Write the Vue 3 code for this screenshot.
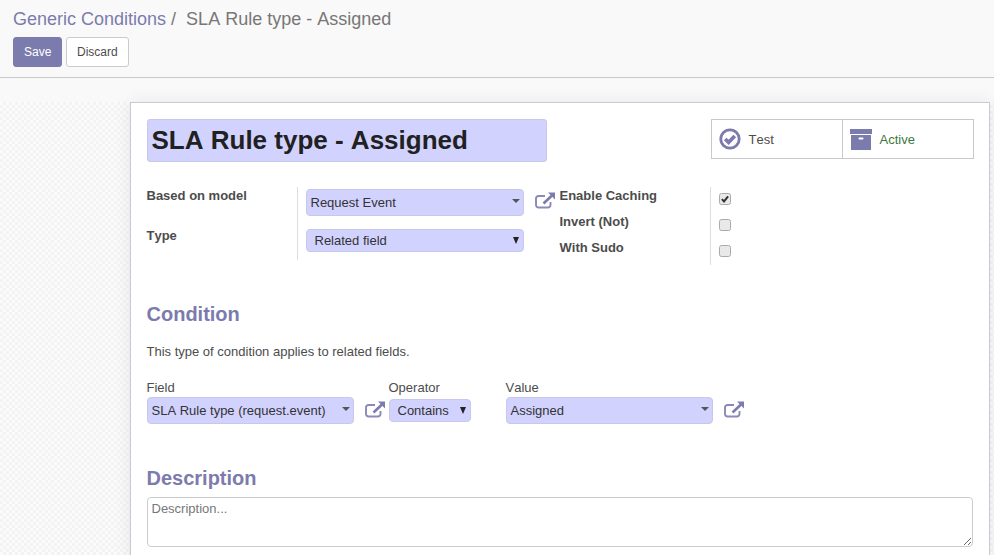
<script setup>
const flags = [
  { label: 'Enable Caching', checked: true },
  { label: 'Invert (Not)', checked: false },
  { label: 'With Sudo', checked: false },
]
</script>

<template>
  <div class="page">
    <header class="panel">
      <div class="crumbs">
        <a class="crumb-link">Generic Conditions</a><span class="crumb-sep">/</span><span class="crumb-cur">SLA Rule type - Assigned</span>
      </div>
      <div class="actions">
        <button class="btn primary">Save</button>
        <button class="btn">Discard</button>
      </div>
    </header>

    <main class="content">
      <section class="sheet">
        <div class="top">
          <div class="title">SLA Rule type - Assigned</div>
          <div class="stats">
            <div class="stat">
              <svg class="stat-icon" width="22" height="22" viewBox="0 0 22 22">
                <circle cx="11" cy="11" r="9.200" fill="none" stroke="#7c7bad" stroke-width="2.800" />
                <path d="M6.200 11l3.400 3.300 6.200-6.300" fill="none" stroke="#7c7bad" stroke-width="3.800" />
              </svg>
              <span>Test</span>
            </div>
            <div class="stat">
              <svg class="stat-icon" width="22" height="21" viewBox="0 0 22 21">
                <rect x="0" y="0" width="22" height="5" fill="#7c7bad" />
                <path d="M1 6h20v15H1z" fill="#7c7bad" />
                <rect x="8.500" y="8.500" width="5" height="2" rx="1" fill="#fff" />
              </svg>
              <span class="green">Active</span>
            </div>
          </div>
        </div>

        <div class="groups">
          <div class="group-left">
            <div class="labels">
              <div class="lbl lbl-model">Based on model</div>
              <div class="lbl lbl-type">Type</div>
            </div>
            <div class="fields">
              <div class="sel sel-model">Request Event<i class="caret"></i></div>
              <div class="sel sel-type">Related field<i class="caret dark"></i></div>
            </div>
            <svg class="ext ext-model" width="20" height="17" viewBox="0 0 20 17">
              <path d="M15.500 10v3a2.500 2.500 0 0 1-2.500 2.500H3.500A2.500 2.500 0 0 1 1 13V6.500A2.500 2.500 0 0 1 3.500 4H10" fill="none" stroke="#8a89b8" stroke-width="1.900" />
              <path d="M13 .5h7v7z" fill="#7c7bad" />
              <path d="M17 3.500L8.500 11.500" fill="none" stroke="#7c7bad" stroke-width="2.600" />
            </svg>
          </div>
          <div class="group-right">
            <div class="labels-right">
              <div v-for="f in flags" :key="f.label" class="lbl flag">{{ f.label }}</div>
            </div>
            <div class="checks">
              <div v-for="f in flags" :key="f.label" class="check">
                <span class="box">
                  <svg v-if="f.checked" width="12" height="12" viewBox="0 0 12 12"><path d="M2.200 6.200l2.600 2.700 4.900-6" fill="none" stroke="#333" stroke-width="2.400" /></svg>
                </span>
              </div>
            </div>
          </div>
        </div>

        <h2 class="section condition">Condition</h2>
        <p class="help">This type of condition applies to related fields.</p>

        <div class="cond-row">
          <div class="col col-field">
            <label>Field</label>
            <div class="sel s26">SLA Rule type (request.event)<i class="caret"></i></div>
          </div>
          <svg class="ext ext-field" width="20" height="17" viewBox="0 0 20 17">
            <path d="M15.500 10v3a2.500 2.500 0 0 1-2.500 2.500H3.500A2.500 2.500 0 0 1 1 13V6.500A2.500 2.500 0 0 1 3.500 4H10" fill="none" stroke="#8a89b8" stroke-width="1.900" />
            <path d="M13 .5h7v7z" fill="#7c7bad" />
            <path d="M17 3.500L8.500 11.500" fill="none" stroke="#7c7bad" stroke-width="2.600" />
          </svg>
          <div class="col col-op">
            <label>Operator</label>
            <div class="sel sel-op">Contains<i class="caret dark"></i></div>
          </div>
          <div class="col col-val">
            <label>Value</label>
            <div class="sel s26">Assigned<i class="caret"></i></div>
          </div>
          <svg class="ext ext-val" width="20" height="17" viewBox="0 0 20 17">
            <path d="M15.500 10v3a2.500 2.500 0 0 1-2.500 2.500H3.500A2.500 2.500 0 0 1 1 13V6.500A2.500 2.500 0 0 1 3.500 4H10" fill="none" stroke="#8a89b8" stroke-width="1.900" />
            <path d="M13 .5h7v7z" fill="#7c7bad" />
            <path d="M17 3.500L8.500 11.500" fill="none" stroke="#7c7bad" stroke-width="2.600" />
          </svg>
        </div>

        <h2 class="section description">Description</h2>
        <textarea class="desc" placeholder="Description..."></textarea>
      </section>
    </main>
  </div>
</template>

<style>
html, body { margin: 0; height: 100%; overflow: hidden; }
</style>

<style scoped>
.page {
  width: 994px;
  height: 555px;
  overflow: hidden;
  display: flex;
  flex-direction: column;
  font-family: "Liberation Sans", Arial, sans-serif;
  font-size: 13px;
  font-kerning: none;
  color: #4c4c4c;
  background: #f9f9f9;
}
.panel {
  height: 77px;
  background: #f9f9f9;
  border-bottom: 1px solid #c9c9c9;
  padding-left: 13px;
  flex: none;
}
.crumbs {
  height: 37px;
  line-height: 38px;
  font-size: 18px;
  color: #777;
}
.crumb-link { color: #7c7bad; }
.crumb-sep { margin-left: 5px; margin-right: 10px; color: #777; }
.actions { display: flex; gap: 4px; }
.btn {
  height: 30px;
  box-sizing: border-box;
  padding: 0 10px;
  font: 12px/1.5 "Liberation Sans", Arial, sans-serif;
  color: #4c4c4c;
  background: #fff;
  border: 1px solid #ccc;
  border-radius: 3px;
}
.btn.primary {
  width: 49px;
  color: #fff;
  background: #7c7bad;
  border-color: #7c7bad;
}
.content {
  flex: 1;
  display: flex;
  margin-top: 24px;
  padding-left: 130px;
  background-color: #f9f9f9;
  background-image: conic-gradient(#f3f3f3 25%, #fbfbfb 0 50%, #f3f3f3 0 75%, #fbfbfb 0);
  background-size: 6px 6px;
}
.sheet {
  width: 860px;
  height: 460px;
  box-sizing: border-box;
  background: #fff;
  border: 1px solid #c9c9d6;
  border-bottom: 0;
  box-shadow: 0 0 16px rgba(0, 0, 0, 0.08);
  padding: 16px 15px 0 16px;
}
.top { display: flex; justify-content: space-between; align-items: flex-start; }
.title {
  width: 400px;
  height: 43px;
  box-sizing: border-box;
  background: #d2d2ff;
  border: 1px solid #c8c8e8;
  border-radius: 3px;
  padding-left: 3.500px;
  font-size: 26px;
  font-weight: 700;
  line-height: 40px;
  color: #212121;
}
.stats {
  display: flex;
  width: 263px;
  height: 40px;
  box-sizing: border-box;
  border: 1px solid #c9c9c9;
}
.stat {
  flex: 1;
  display: flex;
  align-items: center;
  gap: 7.500px;
  padding-left: 7px;
  font-size: 13px;
  color: #4c4c4c;
}
.stat + .stat { border-left: 1px solid #c9c9c9; }
.green { color: #3d7a3d; }

.groups { display: flex; margin-top: 25px; height: 78px; }
.group-left { display: flex; width: 413px; }
.labels { width: 150px; }
.lbl { font-weight: 700; color: #4c4c4c; line-height: 18px; margin-left: -0.500px; }
.lbl-type { margin-top: 22px; }
.fields {
  width: 218px;
  height: 71px;
  border-left: 1px solid #ddd;
  padding-left: 8px;
  padding-top: 2px;
}
.sel {
  position: relative;
  box-sizing: border-box;
  background: #d2d2ff;
  border: 1px solid #c8c8e8;
  border-radius: 4px;
  color: #333;
  padding-left: 3.500px;
  height: 27px;
  line-height: 25px;
}
.sel-model { width: 218px; }
.sel-type { width: 218px; height: 23px; line-height: 21px; padding-left: 7.500px; margin-top: 13px; }
.caret {
  position: absolute;
  right: 3px;
  top: 9px;
  width: 0;
  height: 0;
  border-left: 4px solid transparent;
  border-right: 4px solid transparent;
  border-top: 4px solid #555;
}
.sel-type .caret, .sel-op .caret { top: 7px; right: 4px; }
.caret.dark {
  border-left-width: 3.500px;
  border-right-width: 3.500px;
  border-top: 7px solid #222;
}
.ext { flex: none; }
.ext-model { margin-left: 11px; margin-top: 5px; }
.group-right { display: flex; }
.labels-right { width: 150px; }
.flag { height: 26px; line-height: 18px; }
.checks { border-left: 1px solid #ddd; height: 78px; padding-left: 8px; box-sizing: border-box; }
.check { height: 24px; margin-bottom: 2px; display: flex; align-items: center; }
.box {
  width: 12px;
  height: 12px;
  box-sizing: border-box;
  background: #e9e9e9;
  border: 1px solid #aaa;
  border-radius: 2.500px;
  display: flex;
  align-items: center;
  justify-content: center;
}
.section {
  margin: 0 0 0 -0.500px;
  font-size: 20px;
  font-weight: 700;
  line-height: 24px;
  color: #7c7bad;
}
.condition { margin-top: 37px; }
.help { margin: 17px 0 0 -0.500px; line-height: 18px; color: #4c4c4c; }
.cond-row { display: flex; align-items: flex-start; margin-top: 18px; }
.col label { display: block; line-height: 18px; color: #4c4c4c; margin-left: -0.500px; }
.col-field { width: 207px; }
.col-op { width: 82px; margin-right: 35px; }
.col-val { width: 207px; }
.s26 { height: 27px; }
.sel-op { height: 23px; line-height: 21px; padding-left: 7.500px; margin-top: 2px; }
.ext-field { margin-left: 11px; margin-top: 22px; margin-right: 4px; }
.ext-val { margin-left: 11px; margin-top: 22px; }
.description { margin-top: 42px; }
.desc {
  display: block;
  width: 826px;
  height: 50px;
  margin-top: 7px;
  box-sizing: border-box;
  border: 1px solid #ccc;
  border-radius: 4px;
  padding: 3px 3.500px;
  font: 13px "Liberation Sans", Arial, sans-serif;
  color: #4c4c4c;
  background: #fff;
  outline: none;
}
.desc::placeholder { color: #777; }
</style>
